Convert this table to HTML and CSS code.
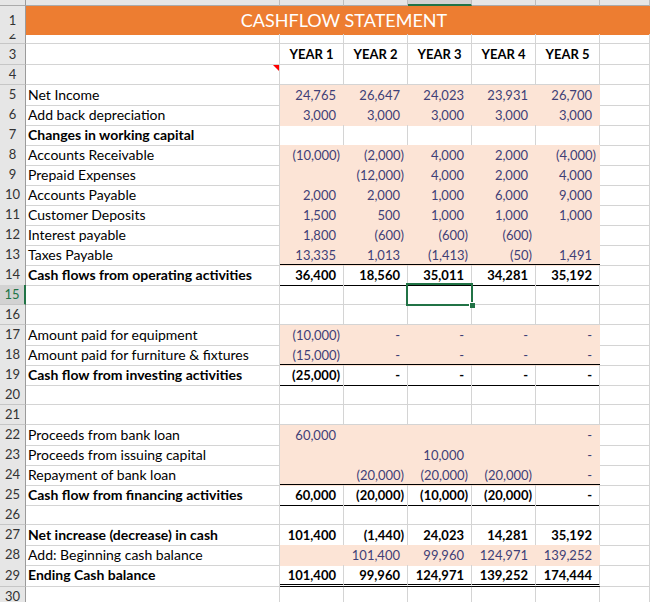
FILE: index.html
```html
<!DOCTYPE html>
<html>
<head>
<meta charset="utf-8">
<title>Cashflow Statement</title>
<link rel="stylesheet" href="styles.css">
</head>
<body>
<div class="sheet">
  <div class="row ch">
    <div class="rh corner"></div>
    <div class="chc"></div><div class="chc"></div><div class="chc"></div><div class="chc sel"></div><div class="chc"></div><div class="chc"></div><div class="chc"></div>
  </div>
  <div class="row r1"><div class="rh">1</div><div class="title">CASHFLOW STATEMENT</div></div>
  <div class="row r2"><div class="rh"><span class="cut">2</span></div><div class="c"></div><div class="c"></div><div class="c"></div><div class="c"></div><div class="c"></div><div class="c"></div><div class="c"></div></div>
  <div class="row r3"><div class="rh">3</div><div class="c"></div><div class="c h">YEAR 1</div><div class="c h">YEAR 2</div><div class="c h">YEAR 3</div><div class="c h">YEAR 4</div><div class="c h">YEAR 5</div><div class="c"></div></div>
  <div class="row"><div class="rh">4</div><div class="c cm"></div><div class="c"></div><div class="c"></div><div class="c"></div><div class="c"></div><div class="c"></div><div class="c"></div></div>
  <div class="row"><div class="rh">5</div><div class="c l">Net Income</div><div class="c pe v">24,765</div><div class="c pe v">26,647</div><div class="c pe v">24,023</div><div class="c pe v">23,931</div><div class="c pe v">26,700</div><div class="c"></div></div>
  <div class="row"><div class="rh">6</div><div class="c l">Add back depreciation</div><div class="c pe v">3,000</div><div class="c pe v">3,000</div><div class="c pe v">3,000</div><div class="c pe v">3,000</div><div class="c pe v">3,000</div><div class="c"></div></div>
  <div class="row"><div class="rh">7</div><div class="c l b">Changes in working capital</div><div class="c"></div><div class="c"></div><div class="c"></div><div class="c"></div><div class="c"></div><div class="c"></div></div>
  <div class="row"><div class="rh">8</div><div class="c l">Accounts Receivable</div><div class="c pe v n">(10,000)</div><div class="c pe v n">(2,000)</div><div class="c pe v">4,000</div><div class="c pe v">2,000</div><div class="c pe v n">(4,000)</div><div class="c"></div></div>
  <div class="row"><div class="rh">9</div><div class="c l">Prepaid Expenses</div><div class="c pe"></div><div class="c pe v n">(12,000)</div><div class="c pe v">4,000</div><div class="c pe v">2,000</div><div class="c pe v">4,000</div><div class="c"></div></div>
  <div class="row"><div class="rh">10</div><div class="c l">Accounts Payable</div><div class="c pe v">2,000</div><div class="c pe v">2,000</div><div class="c pe v">1,000</div><div class="c pe v">6,000</div><div class="c pe v">9,000</div><div class="c"></div></div>
  <div class="row"><div class="rh">11</div><div class="c l">Customer Deposits</div><div class="c pe v">1,500</div><div class="c pe v">500</div><div class="c pe v">1,000</div><div class="c pe v">1,000</div><div class="c pe v">1,000</div><div class="c"></div></div>
  <div class="row"><div class="rh">12</div><div class="c l">Interest payable</div><div class="c pe v">1,800</div><div class="c pe v n">(600)</div><div class="c pe v n">(600)</div><div class="c pe v n">(600)</div><div class="c pe"></div><div class="c"></div></div>
  <div class="row"><div class="rh">13</div><div class="c l">Taxes Payable</div><div class="c pe v">13,335</div><div class="c pe v">1,013</div><div class="c pe v n">(1,413)</div><div class="c pe v n">(50)</div><div class="c pe v">1,491</div><div class="c"></div></div>
  <div class="row"><div class="rh">14</div><div class="c l b">Cash flows from operating activities</div><div class="c v b t">36,400</div><div class="c v b t">18,560</div><div class="c v b t">35,011</div><div class="c v b t">34,281</div><div class="c v b t">35,192</div><div class="c"></div></div>
  <div class="row"><div class="rh rsel">15</div><div class="c"></div><div class="c"></div><div class="c"></div><div class="c selcell"><div class="selbox"><div class="handle"></div></div></div><div class="c"></div><div class="c"></div><div class="c"></div></div>
  <div class="row"><div class="rh">16</div><div class="c"></div><div class="c"></div><div class="c"></div><div class="c"></div><div class="c"></div><div class="c"></div><div class="c"></div></div>
  <div class="row"><div class="rh">17</div><div class="c l">Amount paid for equipment</div><div class="c pe v n">(10,000)</div><div class="c pe v">-</div><div class="c pe v">-</div><div class="c pe v">-</div><div class="c pe v">-</div><div class="c"></div></div>
  <div class="row"><div class="rh">18</div><div class="c l">Amount paid for furniture &amp; fixtures</div><div class="c pe v n">(15,000)</div><div class="c pe v">-</div><div class="c pe v">-</div><div class="c pe v">-</div><div class="c pe v">-</div><div class="c"></div></div>
  <div class="row"><div class="rh">19</div><div class="c l b">Cash flow from investing activities</div><div class="c v n b t">(25,000)</div><div class="c v b t">-</div><div class="c v b t">-</div><div class="c v b t">-</div><div class="c v b t">-</div><div class="c"></div></div>
  <div class="row"><div class="rh">20</div><div class="c"></div><div class="c"></div><div class="c"></div><div class="c"></div><div class="c"></div><div class="c"></div><div class="c"></div></div>
  <div class="row"><div class="rh">21</div><div class="c"></div><div class="c"></div><div class="c"></div><div class="c"></div><div class="c"></div><div class="c"></div><div class="c"></div></div>
  <div class="row"><div class="rh">22</div><div class="c l">Proceeds from bank loan</div><div class="c pe v">60,000</div><div class="c pe"></div><div class="c pe"></div><div class="c pe"></div><div class="c pe v">-</div><div class="c"></div></div>
  <div class="row"><div class="rh">23</div><div class="c l">Proceeds from issuing capital</div><div class="c pe"></div><div class="c pe"></div><div class="c pe v">10,000</div><div class="c pe"></div><div class="c pe v">-</div><div class="c"></div></div>
  <div class="row"><div class="rh">24</div><div class="c l">Repayment of bank loan</div><div class="c pe"></div><div class="c pe v n">(20,000)</div><div class="c pe v n">(20,000)</div><div class="c pe v n">(20,000)</div><div class="c pe v">-</div><div class="c"></div></div>
  <div class="row"><div class="rh">25</div><div class="c l b">Cash flow from financing activities</div><div class="c v b t">60,000</div><div class="c v n b t">(20,000)</div><div class="c v n b t">(10,000)</div><div class="c v n b t">(20,000)</div><div class="c v b t">-</div><div class="c"></div></div>
  <div class="row"><div class="rh">26</div><div class="c"></div><div class="c"></div><div class="c"></div><div class="c"></div><div class="c"></div><div class="c"></div><div class="c"></div></div>
  <div class="row"><div class="rh">27</div><div class="c l b">Net increase (decrease) in cash</div><div class="c v b">101,400</div><div class="c v n b">(1,440)</div><div class="c v b">24,023</div><div class="c v b">14,281</div><div class="c v b">35,192</div><div class="c"></div></div>
  <div class="row"><div class="rh">28</div><div class="c l">Add: Beginning cash balance</div><div class="c pe"></div><div class="c pe v">101,400</div><div class="c pe v">99,960</div><div class="c pe v">124,971</div><div class="c pe v">139,252</div><div class="c"></div></div>
  <div class="row r29"><div class="rh">29</div><div class="c l b">Ending Cash balance</div><div class="c v b dd">101,400</div><div class="c v b dd">99,960</div><div class="c v b dd">124,971</div><div class="c v b dd">139,252</div><div class="c v b dd">174,444</div><div class="c"></div></div>
  <div class="row r30"><div class="rh">30</div><div class="c"></div><div class="c"></div><div class="c"></div><div class="c"></div><div class="c"></div><div class="c"></div><div class="c"></div></div>
</div>
</body>
</html>
```

FILE: styles.css
```css
* {
  box-sizing: border-box;
  margin: 0;
  padding: 0;
}

html, body {
  background: #ffffff;
}

body {
  margin: 0;
  width: 650px;
  height: 602px;
  overflow: hidden;
  font-family: Lato, "Liberation Sans", sans-serif;
  font-size: 13px;
  color: #000000;
}

.sheet {
  width: 650px;
}

.row {
  display: grid;
  grid-template-columns: 26px 254px repeat(5, 64px) 1fr;
  height: 20px;
}

.c,
.rh {
  border-right: 1px solid #d4d4d4;
  border-bottom: 1px solid #d4d4d4;
  white-space: nowrap;
  overflow: hidden;
  line-height: 19px;
}

.rh {
  background: #e6e6e6;
  border-right-color: #9b9b9b;
  border-bottom-color: #c6c6c6;
  text-align: center;
  color: #333333;
}

/* column header strip */
.ch {
  height: 6px;
}

.ch .rh,
.chc {
  background: #e6e6e6;
  border-bottom: 1px solid #ababab;
}

.chc {
  border-right: 1px solid #bdbdbd;
}

.chc.sel {
  background: #d2d2d2;
  border-bottom: 2px solid #217346;
}

/* title row */
.r1 {
  height: 28px;
}

.r1 .rh {
  line-height: 27px;
  padding-top: 1px;
}

.title {
  grid-column: 2 / -1;
  background: #ed7d31;
  color: #ffffff;
  font-size: 18px;
  line-height: 29px;
  text-align: center;
  padding-left: 12px;
  white-space: nowrap;
}

.r2 {
  height: 10px;
}

.cut {
  display: block;
  margin-top: -9px;
}

.r3 {
  height: 21px;
}

.r3 .c,
.r3 .rh {
  line-height: 20px;
}

.r29 {
  height: 22px;
}

.r29 .rh {
  line-height: 21px;
}

.r30 {
  height: 20px;
}

/* cell kinds */
.l {
  padding-left: 2px;
  font-size: 14px;
  line-height: 20px;
  overflow: visible;
}

.h {
  text-align: center;
  font-weight: 700;
}

.b {
  font-weight: 700;
}

.v {
  text-align: right;
  padding-right: 7px;
  line-height: 20px;
}

.v.n {
  padding-right: 3px;
}

.pe {
  background: #fce4d6;
  border-right-color: #fce4d6;
  border-bottom-color: #fce4d6;
  color: #3f3f76;
}

.t {
  border-bottom-color: #000000;
  box-shadow: 0 -1px 0 #000000;
}

.dd {
  border-bottom: 3px double #000000;
  line-height: 20px;
}

/* comment marker */
.cm {
  position: relative;
}

.cm::after {
  content: "";
  position: absolute;
  top: 0;
  right: 0;
  border-top: 6px solid #ff0000;
  border-left: 6px solid transparent;
}

/* selection */
.rh.rsel {
  background: #d2d2d2;
  color: #217346;
  border-right: 2px solid #217346;
}

.selcell {
  position: relative;
  overflow: visible;
}

.selbox {
  position: absolute;
  left: -2px;
  top: -2px;
  right: -2px;
  bottom: -2px;
  border: 2px solid #217346;
}

.handle {
  position: absolute;
  right: -4px;
  bottom: -4px;
  width: 6px;
  height: 6px;
  background: #217346;
  border-left: 1px solid #ffffff;
  border-top: 1px solid #ffffff;
}
```
